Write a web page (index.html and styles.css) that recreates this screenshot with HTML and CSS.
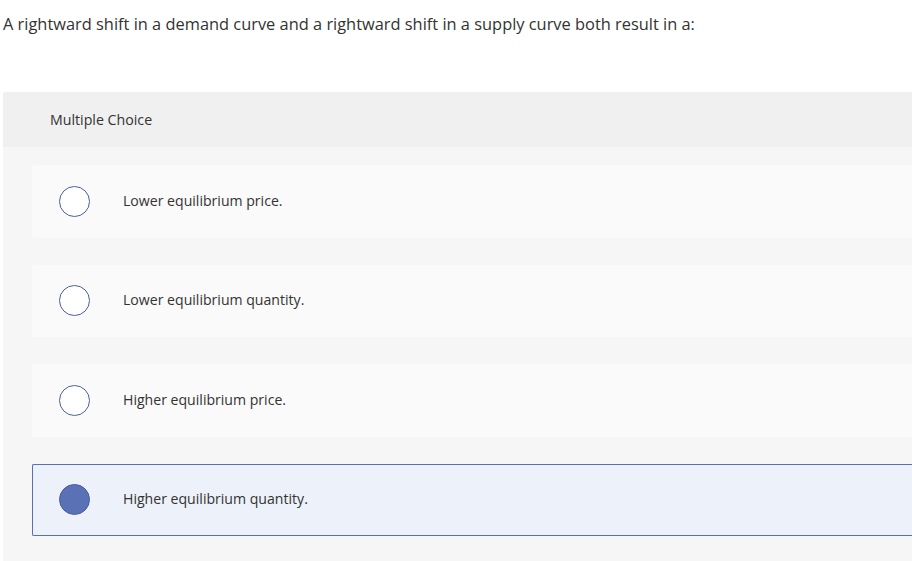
FILE: index.html
```html
<!DOCTYPE html>
<html>
<head>
<meta charset="utf-8">
<link rel="stylesheet" href="styles.css">
</head>
<body>
<div class="question">A rightward shift in a demand curve and a rightward shift in a supply curve both result in a:</div>
<div class="panel">
  <div class="panel-head">Multiple Choice</div>
  <div class="panel-body">
    <div class="option"><span class="radio"></span><span class="label">Lower equilibrium price.</span></div>
    <div class="option"><span class="radio"></span><span class="label">Lower equilibrium quantity.</span></div>
    <div class="option"><span class="radio"></span><span class="label">Higher equilibrium price.</span></div>
    <div class="option selected"><span class="radio"></span><span class="label">Higher equilibrium quantity.</span></div>
  </div>
</div>
</body>
</html>
```
FILE: styles.css
```css
html, body {
  margin: 0;
  padding: 0;
  background: #ffffff;
  overflow: hidden;
}
body {
  font-family: "Open Sans", "Liberation Sans", sans-serif;
  color: #333333;
  width: 912px;
  height: 561px;
}
.question {
  font-size: 16.4px;
  line-height: 20px;
  padding: 14px 0 0 3px;
  height: 92px;
  box-sizing: border-box;
  color: #333;
}
.panel {
  margin-left: 3px;
  border-radius: 3px 0 0 0;
  overflow: hidden;
  background: #f6f6f6;
  height: 469px;
}
.panel-head {
  background: #f0f0f0;
  height: 55px;
  display: flex;
  align-items: center;
  padding-left: 47px;
  font-size: 14.2px;
  color: #333;
}
.panel-body {
  display: flex;
  flex-direction: column;
  gap: 27px;
  padding: 18px 0 0 29px;
}
.option {
  height: 72.5px;
  box-sizing: border-box;
  background: #fafafa;
  border-radius: 2px 0 0 2px;
  display: flex;
  align-items: center;
  padding-left: 27px;
}
.option.selected {
  background: #edf1f9;
  border: 1px solid #5a72b5;
  border-right: none;
  padding-left: 26px;
}
.radio {
  width: 31px;
  height: 31px;
  box-sizing: border-box;
  border: 1.3px solid #4b5f9d;
  border-radius: 50%;
  background: #fff;
  flex: none;
}
.selected .radio {
  background: #5a72b5;
  border-color: #475c9c;
}
.label {
  margin-left: 33px;
  margin-bottom: 2px;
  font-size: 14.1px;
  color: #333;
}
```
